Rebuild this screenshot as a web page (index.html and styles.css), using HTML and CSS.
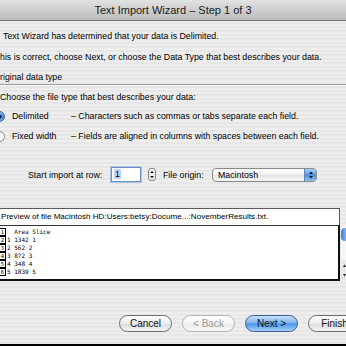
FILE: index.html
```html
<!DOCTYPE html>
<html>
<head>
<meta charset="utf-8">
<link rel="stylesheet" href="styles.css">
</head>
<body>
<div class="window">
  <div class="titlebar">Text Import Wizard – Step 1 of 3</div>
  <div class="content">
    <p class="line l1">Text Wizard has determined that your data is Delimited.</p>
    <p class="line l2">his is correct, choose Next, or choose the Data Type that best describes your data.</p>
    <div class="group-label">riginal data type</div>
    <p class="line l3">Choose the file type that best describes your data:</p>
    <div class="radio-row r1">
      <span class="radio on"></span>
      <span class="rlabel">Delimited</span>
      <span class="rdesc">– Characters such as commas or tabs separate each field.</span>
    </div>
    <div class="radio-row r2">
      <span class="radio"></span>
      <span class="rlabel">Fixed width</span>
      <span class="rdesc">– Fields are aligned in columns with spaces between each field.</span>
    </div>
    <div class="import-row">
      <span class="ilabel">Start import at row:</span>
      <span class="field"><span class="sel">1</span></span>
      <span class="spinner"><svg width="8" height="13" viewBox="0 0 8 13"><polygon points="2.2,5 4,2.8 5.8,5" fill="#111"/><polygon points="2.2,8 4,10.2 5.8,8" fill="#111"/></svg></span>
      <span class="olabel">File origin:</span>
      <span class="popup"><span class="ptext">Macintosh</span><span class="parrow"><svg width="10" height="12" viewBox="0 0 10 12"><polygon points="3,5 5,2.5 7,5" fill="#111"/><polygon points="3,7 5,9.5 7,7" fill="#111"/></svg></span></span>
    </div>
    <div class="preview">
      <div class="preview-head">Preview of file Macintosh HD:Users:betsy:Docume...:NovemberResults.txt.</div>
      <div class="preview-body">
        <div class="data">
          <div class="drow"><span class="rn">1</span><span class="rt">  Area Slice</span></div>
          <div class="drow"><span class="rn">2</span><span class="rt">1 1342 1</span></div>
          <div class="drow"><span class="rn">3</span><span class="rt">2 562 2</span></div>
          <div class="drow"><span class="rn">4</span><span class="rt">3 872 3</span></div>
          <div class="drow"><span class="rn">5</span><span class="rt">4 348 4</span></div>
          <div class="drow"><span class="rn">6</span><span class="rt">5 1839 5</span></div>
        </div>
        <div class="scroller">
          <div class="track"><div class="thumb"></div></div>
          <div class="arrows"><svg width="6" height="20" viewBox="0 0 6 20"><polygon points="2,7 3.5,4.5 5,7" fill="#222"/><polygon points="2,14 3.5,16.5 5,14" fill="#222"/></svg></div>
        </div>
      </div>
    </div>
    <div class="buttons">
      <span class="btn">Cancel</span>
      <span class="btn disabled">&lt; Back</span>
      <span class="btn default">Next &gt;</span>
      <span class="btn">Finish</span>
    </div>
  </div>
</div>
</body>
</html>
```
FILE: styles.css
```css
html, body {
  margin: 0;
  padding: 0;
}
body {
  width: 346px;
  height: 346px;
  overflow: hidden;
  background: #000;
  font-family: "Liberation Sans", Arial, sans-serif;
  font-size: 8.8px;
  color: #000;
}
.window {
  height: 344px;
  overflow: hidden;
  background: repeating-linear-gradient(to bottom, #eeeeee 0, #eeeeee 2px, #e7e7e7 2px, #e7e7e7 4px);
}
.titlebar {
  height: 20px;
  line-height: 20px;
  text-align: center;
  font-size: 11px;
  color: #1a1a1a;
  background: linear-gradient(#e2e2e2, #bcbcbc);
  border-bottom: 1px solid #757575;
}
.line {
  margin: 0;
  height: 12px;
  line-height: 12px;
  white-space: nowrap;
}
.l1 { margin-top: 9px; padding-left: 3px; }
.l2 { margin-top: 9px; }
.group-label {
  margin-top: 8px;
  height: 13px;
  line-height: 12px;
  border-bottom: 1px solid #9c9c9c;
  box-shadow: 0 1px 0 #fafafa;
  white-space: nowrap;
}
.l3 { margin-top: 6px; }
.radio-row {
  display: flex;
  align-items: center;
  height: 12px;
  white-space: nowrap;
}
.r1 { margin-top: 7px; }
.r2 { margin-top: 8px; }
.radio {
  flex: none;
  width: 11px;
  height: 11px;
  box-sizing: border-box;
  margin-left: -6px;
  border-radius: 50%;
  border: 1px solid #858585;
  background: linear-gradient(#f4f4f4, #ffffff);
}
.radio.on {
  border-color: #3a5f96;
  background: radial-gradient(circle at 50% 50%, #14244a 0, #14244a 1.8px, transparent 2.4px), linear-gradient(#8fc0f2, #3d86d8 60%, #7eb7ef);
}
.rlabel {
  flex: none;
  width: 59px;
  margin-left: 7px;
}
.import-row {
  margin-top: 24px;
  height: 17px;
  display: flex;
  align-items: center;
  padding-left: 28px;
  white-space: nowrap;
}
.ilabel { flex: none; width: 78px; }
.field {
  flex: none;
  box-sizing: border-box;
  width: 30px;
  height: 15px;
  margin-left: 5px;
  border: 1px solid #6f8fbf;
  box-shadow: 0 0 0 1px #a8c6ea;
  background: #fff;
  padding-left: 2px;
  line-height: 13px;
}
.sel { background: #b9d5f8; padding: 0 1px; }
.spinner {
  flex: none;
  width: 8px;
  height: 13px;
  box-sizing: border-box;
  margin-left: 7px;
  border: 1px solid #8a8a8a;
  border-radius: 3px;
  background: linear-gradient(#fdfdfd, #e2e2e2);
  display: flex;
  align-items: center;
  justify-content: center;
}
.spinner svg { flex: none; }
.olabel { flex: none; width: 43px; margin-left: 7px; }
.popup {
  flex: none;
  display: flex;
  box-sizing: border-box;
  width: 105px;
  height: 14px;
  margin-left: 6px;
  border: 1px solid #8a8a8a;
  border-radius: 4px;
  overflow: hidden;
  background: linear-gradient(#ffffff, #f0f0f0 50%, #e4e4e4 51%, #f6f6f6);
}
.ptext { flex: 1; padding-left: 5px; line-height: 12px; }
.parrow {
  flex: none;
  width: 11px;
  border-left: 1px solid #5d83bd;
  background: linear-gradient(#a9d0f7, #4c93e0 55%, #8ec3f5);
  display: flex;
  align-items: center;
  justify-content: center;
}
.preview { margin-top: 25px; }
.preview-head {
  width: 338px;
  height: 16px;
  line-height: 16px;
  padding-left: 1px;
  font-size: 8.1px;
  border-top: 1px solid #5a5a5a;
  border-right: 1px solid #5a5a5a;
  background: #fff;
  white-space: nowrap;
  overflow: hidden;
}
.preview-body { display: flex; }
.data {
  flex: none;
  box-sizing: border-box;
  width: 340px;
  height: 56px;
  padding-top: 2px;
  border-top: 1px solid #333;
  border-right: 2px solid #111;
  border-bottom: 2px solid #111;
  background: #fff;
}
.drow { display: flex; height: 8px; }
.rn {
  flex: none;
  box-sizing: border-box;
  width: 6px;
  height: 8px;
  border: 1px solid #000;
  border-left: none;
  font-family: "DejaVu Sans Mono", monospace;
  font-size: 5.5px;
  line-height: 6px;
  text-align: center;
}
.rt {
  font-family: "DejaVu Sans Mono", monospace;
  font-size: 6px;
  line-height: 8px;
  white-space: pre;
  padding-left: 1px;
}
.scroller {
  flex: none;
  width: 6px;
  margin-left: 1px;
  display: flex;
  flex-direction: column;
}
.track {
  height: 35px;
  background: #f7f7f7;
  padding-top: 3px;
  box-sizing: border-box;
}
.thumb {
  height: 13px;
  border-radius: 4px 0 0 4px;
  background: linear-gradient(to right, #3e7fd2, #8cc0f2);
}
.arrows {
  height: 20px;
  background: #e8e8e8;
}
.buttons {
  margin-top: 34px;
  display: flex;
  gap: 10px;
  padding-left: 119px;
  white-space: nowrap;
}
.btn {
  flex: none;
  box-sizing: border-box;
  width: 53px;
  height: 17px;
  border: 1px solid #6c6c6c;
  border-radius: 9px;
  background: linear-gradient(#fefefe, #ececec 50%, #dcdcdc 52%, #f4f4f4);
  font-size: 10px;
  line-height: 15px;
  text-align: center;
  color: #111;
}
.btn.disabled {
  border-color: #b4b4b4;
  color: #9a9a9a;
  background: linear-gradient(#ffffff, #f4f4f4 50%, #ebebeb 52%, #f8f8f8);
}
.btn.default {
  border-color: #3e5c93;
  background: linear-gradient(#c5e0fb, #7db6ef 45%, #4a95e6 52%, #a6d2fa);
}
```
